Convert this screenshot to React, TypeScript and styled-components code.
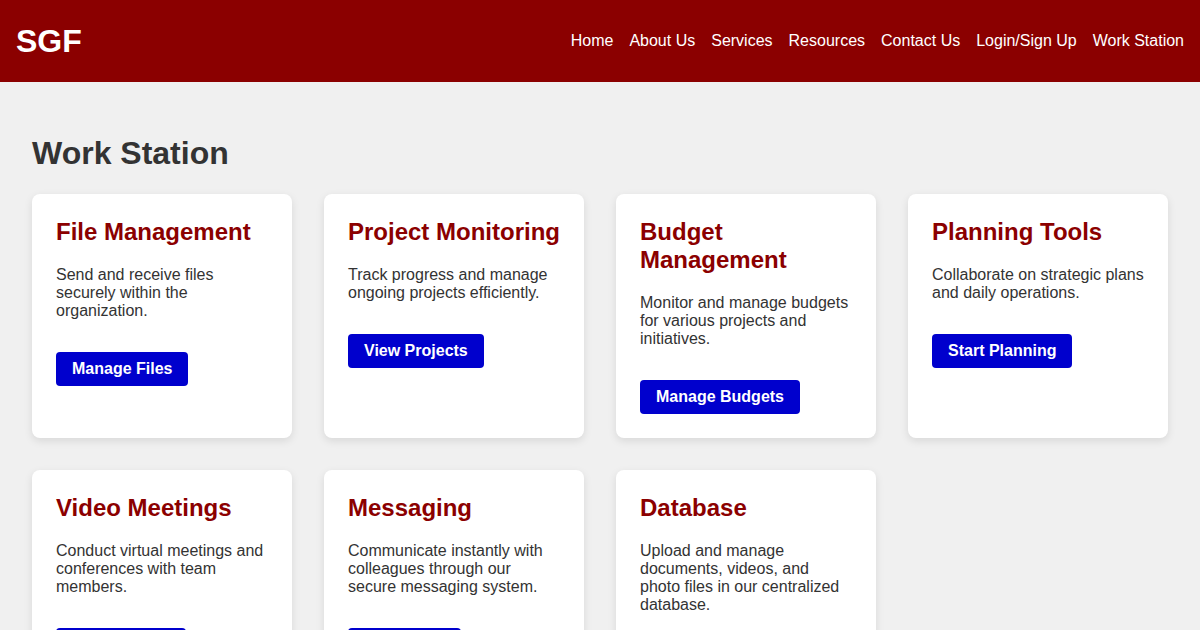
import React from 'react'
import styled, { createGlobalStyle } from 'styled-components'

const GlobalStyle = createGlobalStyle`
  body {
    margin: 0;
    background-color: #f0f0f0;
    font-family: "Liberation Sans", Arial, sans-serif;
    color: #333;
  }
`

const Header = styled.header`
  display: flex;
  justify-content: space-between;
  align-items: center;
  height: 82px;
  padding: 0 16px;
  background-color: #8b0000;
  color: #fff;
`
const Logo = styled.h1`
  margin: 0;
  font-size: 32px;
  font-weight: bold;
`
const Nav = styled.nav`
  display: flex;
  gap: 16px;
`
const NavLink = styled.a`
  color: #fff;
  text-decoration: none;
  font-size: 16px;
`
const Main = styled.main`
  padding: 53px 32px 32px;
`
const Title = styled.h2`
  margin: 0 0 22px;
  font-size: 32px;
  color: #333;
`
const Grid = styled.div`
  display: grid;
  grid-template-columns: repeat(4, 1fr);
  gap: 32px;
`
const Card = styled.div`
  background-color: #fff;
  border-radius: 8px;
  padding: 24px;
  box-shadow: 0 3px 8px rgba(0, 0, 0, 0.1);
`
const CardTitle = styled.h3`
  margin: 0 0 20px;
  font-size: 24px;
  color: #8b0000;
`
const CardText = styled.p`
  margin: 0 0 32px;
  font-size: 16px;
  color: #333;
`
const Button = styled.button`
  display: inline-block;
  padding: 8px 16px;
  border: none;
  border-radius: 4px;
  background-color: #0000cd;
  color: #fff;
  font-family: inherit;
  font-size: 16px;
  font-weight: bold;
  cursor: pointer;
`

const links = ['Home', 'About Us', 'Services', 'Resources', 'Contact Us', 'Login/Sign Up', 'Work Station']

const tools = [
  { title: 'File Management', text: 'Send and receive files securely within the organization.', action: 'Manage Files' },
  { title: 'Project Monitoring', text: 'Track progress and manage ongoing projects efficiently.', action: 'View Projects' },
  { title: 'Budget Management', text: 'Monitor and manage budgets for various projects and initiatives.', action: 'Manage Budgets' },
  { title: 'Planning Tools', text: 'Collaborate on strategic plans and daily operations.', action: 'Start Planning' },
  { title: 'Video Meetings', text: 'Conduct virtual meetings and conferences with team members.', action: 'Join Meeting' },
  { title: 'Messaging', text: 'Communicate instantly with colleagues through our secure messaging system.', action: 'Open Chat' },
  { title: 'Database', text: 'Upload and manage documents, videos, and photo files in our centralized database.', action: 'Access Database' },
]

const App: React.FC = () => {
  return (
    <>
      <GlobalStyle />
      <Header>
        <Logo>SGF</Logo>
        <Nav>
          {links.map((l) => (
            <NavLink key={l} href="#">{l}</NavLink>
          ))}
        </Nav>
      </Header>
      <Main>
        <Title>Work Station</Title>
        <Grid>
          {tools.map((t) => (
            <Card key={t.title}>
              <CardTitle>{t.title}</CardTitle>
              <CardText>{t.text}</CardText>
              <Button>{t.action}</Button>
            </Card>
          ))}
        </Grid>
      </Main>
    </>
  )
}

export default App
